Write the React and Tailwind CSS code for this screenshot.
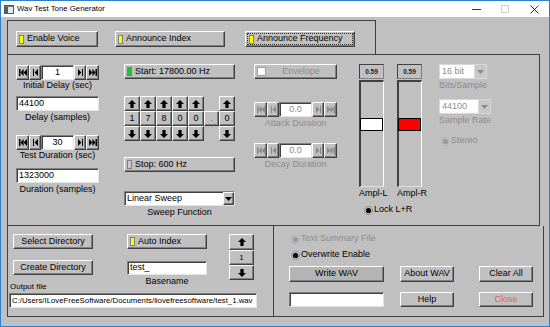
import React from "react";

const raised =
  "bg-[#c0c0c0] border border-t-white border-l-white border-r-[#404040] border-b-[#404040] shadow-[inset_-1px_-1px_0_#808080]";
const sunken =
  "bg-white border border-t-[#808080] border-l-[#808080] border-r-[#e4e4e4] border-b-[#e4e4e4] shadow-[inset_1px_1px_0_#404040]";

function DblLeft({ c, flip }) {
  return (
    <svg width="8" height="7" viewBox="0 0 8 7" fill={c} className={flip ? "-scale-x-100" : ""}>
      <rect x="0" y="0" width="1.5" height="7" />
      <polygon points="4.6,0 1.4,3.5 4.6,7" />
      <polygon points="8,0 4.6,3.5 8,7" />
    </svg>
  );
}

function SingleLeft({ c, flip }) {
  return (
    <svg width="5" height="7" viewBox="0 0 5 7" fill={c} className={flip ? "-scale-x-100" : ""}>
      <rect x="0" y="0" width="1" height="7" />
      <polygon points="5,0 1.6,3.5 5,7" />
    </svg>
  );
}

function UpArrow({ down }) {
  return (
    <svg width="8" height="8" viewBox="0 0 8 8" fill="#000" className={down ? "-scale-y-100" : ""}>
      <polygon points="4,0 8,4 5.6,4 5.6,8 2.4,8 2.4,4 0,4" />
    </svg>
  );
}

function DownTri({ c }) {
  return (
    <svg width="7" height="4" viewBox="0 0 7 4" fill={c}>
      <polygon points="0,0 7,0 3.5,4" />
    </svg>
  );
}

function Radio({ disabled }) {
  return (
    <svg width="9" height="9" viewBox="0 0 9 9">
      <circle cx="4.5" cy="4.5" r="4" fill="none" stroke={disabled ? "#a8a8a8" : "#707070"} strokeWidth="1" strokeDasharray="1.4 0.9" />
      <circle cx="4.5" cy="4.5" r="2.6" fill={disabled ? "#9a9a9a" : "#000"} />
    </svg>
  );
}

function Spinner({ value, disabled }) {
  const c = disabled ? "#8a8a8a" : "#000";
  const cell = `${raised} flex items-center justify-center`;
  return (
    <div className="flex h-[15px] w-[83px]">
      <div className={`${cell} w-[13px]`}><DblLeft c={c} /></div>
      <div className={`${cell} w-[12px]`}><SingleLeft c={c} /></div>
      <div className={`${sunken} flex-1 flex items-center justify-center text-[9px] ${disabled ? "text-[#8a8a8a]" : "text-black"}`}>{value}</div>
      <div className={`${cell} w-[12px]`}><SingleLeft c={c} flip /></div>
      <div className={`${cell} w-[13px]`}><DblLeft c={c} flip /></div>
    </div>
  );
}

function Ind({ color = "bg-[#ffff00]" }) {
  return <span className={`block w-[5px] h-[9px] ${color} border border-[#808080] shrink-0`} />;
}

function Label({ children, h = "h-[12px] leading-[12px]", disabled, className = "" }) {
  return (
    <div className={`${h} text-[9px] text-center whitespace-nowrap ${disabled ? "text-[#8c8c8c]" : "text-black"} ${className}`}>
      {children}
    </div>
  );
}

function Slider({ thumb }) {
  return (
    <div className="flex flex-col w-[25px]">
      <div className="h-[15px] border border-[#808080] border-t-[#404040] border-l-[#404040] flex items-center justify-center text-[6.5px] font-bold text-[#202020]">0.59</div>
      <div className="relative mt-[1px] h-[107px] border-l-2 border-t-2 border-r border-b border-t-[#404040] border-l-[#404040] border-r-white border-b-[#e0e0e0]">
        <div className={`absolute -left-[1px] right-0 top-[36px] h-[13px] border border-black ${thumb}`} />
      </div>
      <Label>{thumb === "bg-white" ? "Ampl-L" : "Ampl-R"}</Label>
    </div>
  );
}

function DisabledSelect({ value, w }) {
  return (
    <div className={`flex h-[15px] ${w} bg-white border border-[#d8d8d8]`}>
      <div className="flex-1 flex items-center pl-[2px] text-[9px] text-[#8c8c8c]">{value}</div>
      <div className="w-[12px] bg-[#c8c8c8] border-l border-[#d8d8d8] flex items-center justify-center"><DownTri c="#8a8a8a" /></div>
    </div>
  );
}

export default function App() {
  return (
    <div className="w-[550px] h-[327px] bg-[#c0c0c0] border border-[#2f7fd0] flex flex-col font-['Liberation_Sans',Arial,sans-serif] text-black overflow-hidden">
      {/* Title bar */}
      <div className="h-[16px] bg-white flex items-center shrink-0">
        <svg width="10" height="9" viewBox="0 0 10 9" className="ml-[3px]">
          <rect x="0.5" y="0.5" width="9" height="8" fill="#e8e8e8" stroke="#555" />
          <rect x="1" y="2" width="3" height="6" fill="#3a6a6a" />
          <rect x="1" y="1" width="8" height="1" fill="#777" />
        </svg>
        <span className="ml-[3px] text-[7.8px] leading-[10px]">Wav Test Tone Generator</span>
        <div className="flex-1" />
        <svg width="9" height="9" viewBox="0 0 9 9" className="mr-[20px]"><line x1="0" y1="4.5" x2="9" y2="4.5" stroke="#000" strokeWidth="0.8" /></svg>
        <svg width="8" height="8" viewBox="0 0 8 8" className="mr-[21px]"><rect x="0.5" y="0.5" width="7" height="7" fill="none" stroke="#cfcfcf" /></svg>
        <svg width="9" height="9" viewBox="0 0 9 9" className="mr-[10px]"><path d="M0.5 0.5 L8.5 8.5 M8.5 0.5 L0.5 8.5" stroke="#000" strokeWidth="0.8" /></svg>
      </div>

      {/* Top panel */}
      <div className="ml-[6px] mt-[3px] w-[369px] h-[34px] border-t border-l border-r border-[#404040] flex items-start pt-[10px] pl-[8px] shrink-0">
        <div className={`${raised} w-[82px] h-[16px] flex items-center pl-[2px] gap-[3px] text-[9px]`}><Ind />Enable Voice</div>
        <div className={`${raised} ml-[17px] w-[110px] h-[16px] flex items-center pl-[2px] gap-[3px] text-[9px]`}><Ind />Announce Index</div>
        <div className={`${raised} ml-[20px] w-[110px] h-[16px] p-[1px] text-[9px]`}>
          <div className="w-full h-full border border-dotted border-[#303030] flex items-center pl-[1px] gap-[3px]"><Ind />Announce Frequency</div>
        </div>
      </div>

      {/* Main panel */}
      <div className="ml-[6px] w-[533px] h-[172px] border border-[#404040] flex items-start shrink-0">
        {/* Col 1 */}
        <div className="ml-[8px] mt-[10px] w-[83px] flex flex-col">
          <Spinner value="1" />
          <Label h="h-[11px] leading-[11px]">Initial Delay (sec)</Label>
          <div className={`${sunken} mt-[5px] h-[15px] flex items-center pl-[2px] text-[9px]`}>44100</div>
          <Label>Delay (samples)</Label>
          <div className="mt-[12px]"><Spinner value="30" /></div>
          <Label h="h-[10px] leading-[10px]">Test Duration (sec)</Label>
          <div className={`${sunken} mt-[8px] h-[15px] flex items-center pl-[2px] text-[9px]`}>1323000</div>
          <Label>Duration (samples)</Label>
        </div>

        {/* Col 2 */}
        <div className="ml-[25px] mt-[9px] w-[111px] flex flex-col">
          <div className={`${raised} h-[15px] flex items-center pl-[2px] gap-[3px] text-[9px]`}><Ind color="bg-[#20c040]" />Start: 17800.00 Hz</div>
          <div className="mt-[17px] flex flex-col">
            <div className="flex h-[15px]">
              {[0, 1, 2, 3, 4].map((i) => (
                <div key={i} className={`${raised} w-[16px] flex items-center justify-center`}><UpArrow /></div>
              ))}
              <div className="w-[15px]" />
              <div className={`${raised} w-[16px] flex items-center justify-center`}><UpArrow /></div>
            </div>
            <div className="flex h-[15px]">
              {["1", "7", "8", "0", "0"].map((d, i) => (
                <div key={i} className={`${raised} w-[16px] flex items-center justify-center text-[9px]`}>{d}</div>
              ))}
              <div className={`${raised} w-[15px] flex items-center justify-center text-[9px] text-[#606060]`}>.</div>
              <div className={`${raised} w-[16px] flex items-center justify-center text-[9px]`}>0</div>
            </div>
            <div className="flex h-[15px]">
              {[0, 1, 2, 3, 4].map((i) => (
                <div key={i} className={`${raised} w-[16px] flex items-center justify-center`}><UpArrow down /></div>
              ))}
              <div className="w-[15px]" />
              <div className={`${raised} w-[16px] flex items-center justify-center`}><UpArrow down /></div>
            </div>
          </div>
          <div className={`${raised} mt-[16px] h-[15px] flex items-center pl-[2px] gap-[3px] text-[9px]`}><Ind color="bg-[#c8c8c8]" />Stop: 600 Hz</div>
          <div className={`${sunken} mt-[19px] h-[15px] flex`}>
            <div className="flex-1 flex items-center pl-[2px] text-[9px]">Linear Sweep</div>
            <div className={`${raised} w-[11px] flex items-center justify-center`}><DownTri c="#000" /></div>
          </div>
          <Label>Sweep Function</Label>
        </div>

        {/* Col 3 - envelope */}
        <div className="ml-[19px] mt-[9px] w-[83px] flex flex-col">
          <div className={`${raised} h-[15px] flex items-center text-[9px]`}>
            <span className="ml-[2px] block w-[9px] h-[9px] bg-white border border-[#a0a0a0] shrink-0" />
            <span className="flex-1 text-center text-[#8c8c8c]">Envelope</span>
          </div>
          <div className="mt-[23px]"><Spinner value="0.0" disabled /></div>
          <Label disabled>Attack Duration</Label>
          <div className="mt-[14px]"><Spinner value="0.0" disabled /></div>
          <Label disabled>Decay Duration</Label>
        </div>

        {/* Sliders */}
        <div className="ml-[22px] mt-[9px] flex flex-col">
          <div className="flex gap-[13px]">
            <Slider thumb="bg-white" />
            <Slider thumb="bg-[#ff0000]" />
          </div>
          <div className="mt-[5px] h-[12px] flex items-center gap-[1px] ml-[5px] text-[9px]"><Radio />Lock L+R</div>
        </div>

        {/* Right col */}
        <div className="ml-[17px] mt-[9px] w-[52px] flex flex-col">
          <DisabledSelect value="16 bit" w="w-[48px]" />
          <Label disabled className="w-[48px]">Bits/Sample</Label>
          <div className="mt-[8px]"><DisabledSelect value="44100" w="w-[52px]" /></div>
          <Label disabled>Sample Rate</Label>
          <div className="mt-[9px] ml-[2px] h-[12px] flex items-center gap-[1px] text-[9px] text-[#8c8c8c]"><Radio disabled />Stereo</div>
        </div>
      </div>

      {/* Bottom row */}
      <div className="flex shrink-0">
        <div className="ml-[6px] w-[267px] h-[91px] border-l border-r border-b border-[#404040] flex flex-col">
          <div className="flex items-start pt-[8px]">
            <div className="ml-[5px] w-[80px] flex flex-col">
              <div className={`${raised} h-[15px] flex items-center justify-center text-[9px]`}>Select Directory</div>
              <div className={`${raised} mt-[11px] h-[15px] flex items-center justify-center text-[9px]`}>Create Directory</div>
              <div className="-ml-[3px] mt-[7px] h-[10px] leading-[10px] text-[8px] whitespace-nowrap">Output file</div>
            </div>
            <div className="ml-[34px] w-[80px] flex flex-col">
              <div className={`${raised} h-[15px] flex items-center pl-[2px] gap-[3px] text-[9px]`}><Ind />Auto Index</div>
              <div className={`${sunken} mt-[12px] h-[14px] flex items-center pl-[2px] text-[9px]`}>test_</div>
              <Label className="text-[#303030]">Basename</Label>
            </div>
            <div className="ml-[22px] w-[25px] flex flex-col">
              <div className={`${raised} h-[16px] flex items-center justify-center`}><UpArrow /></div>
              <div className={`${raised} h-[15px] flex items-center justify-center text-[8px]`}>1</div>
              <div className={`${raised} h-[15px] flex items-center justify-center`}><UpArrow down /></div>
            </div>
          </div>
          <div className={`${sunken} ml-[1px] mt-[1px] w-[248px] h-[15px] flex items-center pl-[2px] text-[7.8px] whitespace-nowrap overflow-hidden`}>
            C:/Users/ILoveFreeSoftware/Documents/ilovefreesoftware/test_1.wav
          </div>
        </div>
        <div className="w-[270px] h-[91px] border-r border-b border-[#404040] flex flex-col pl-[15px]">
          <div className="mt-[7px] ml-[2px] h-[12px] flex items-center gap-[1px] text-[9px] text-[#8c8c8c]"><Radio disabled />Text Summary File</div>
          <div className="mt-[4px] ml-[2px] h-[12px] flex items-center gap-[1px] text-[9px]"><Radio />Overwrite Enable</div>
          <div className="mt-[5px] flex h-[16px]">
            <div className={`${raised} !bg-[#b4b4b4] w-[95px] flex items-center justify-center text-[9px]`}>Write WAV</div>
            <div className={`${raised} ml-[16px] w-[54px] flex items-center justify-center text-[9px]`}>About WAV</div>
            <div className={`${raised} ml-[25px] w-[54px] flex items-center justify-center text-[9px]`}>Clear All</div>
          </div>
          <div className="mt-[10px] flex h-[15px]">
            <div className={`${sunken} w-[95px]`} />
            <div className={`${raised} ml-[16px] w-[54px] flex items-center justify-center text-[9px]`}>Help</div>
            <div className={`${raised} ml-[25px] w-[54px] flex items-center justify-center text-[9px] text-[#f05a5a]`}>Close</div>
          </div>
        </div>
      </div>
    </div>
  );
}
